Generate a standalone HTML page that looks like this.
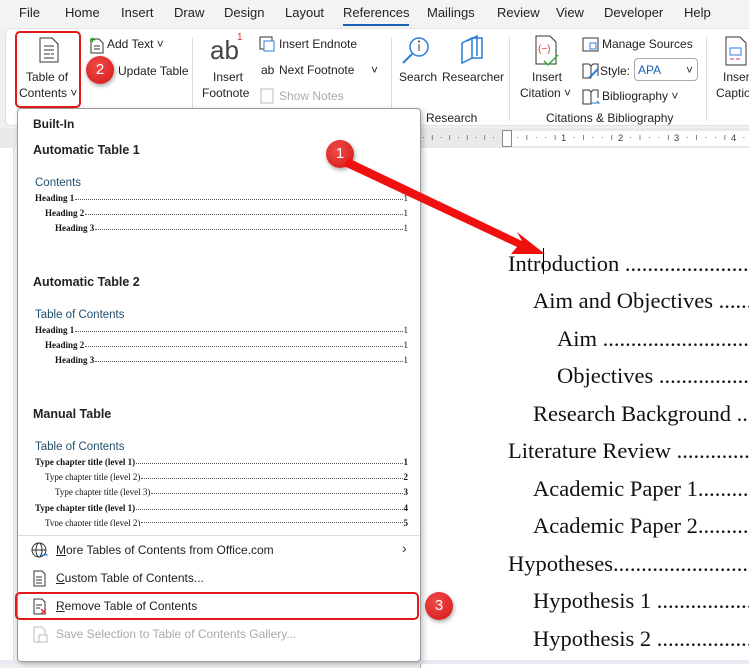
<!DOCTYPE html>
<html><head><meta charset="utf-8"><style>
*{margin:0;padding:0;box-sizing:border-box}
body{width:749px;height:664px;overflow:hidden;background:#f0f0f0;font-family:"Liberation Sans",sans-serif;position:relative;color:#222}
.abs{position:absolute;white-space:nowrap}
.tab{position:absolute;top:5px;font-size:13px;color:#222}
.rib{position:absolute;left:5px;top:28px;width:760px;height:98px;background:#fff;border-radius:6px;border:1px solid #e2e2e2}
.rt{position:absolute;font-size:12px;color:#222;white-space:nowrap}
.sep{position:absolute;top:8px;width:1px;height:84px;background:#ddd}
.page{position:absolute;left:420px;top:148px;width:340px;height:520px;background:#fff;border-left:1px solid #bbb}
.doc{position:absolute;font-family:"Liberation Serif",serif;font-size:22.5px;color:#111;white-space:nowrap;overflow:hidden}
.menu{position:absolute;left:17px;top:108px;width:404px;height:554px;background:#fff;border:1px solid #9a9a9a;border-radius:4px;box-shadow:2px 2px 6px rgba(0,0,0,.25);overflow:hidden}
.mh{position:absolute;left:15px;font-weight:bold;font-size:12.5px;color:#222}
.ct{position:absolute;left:17px;font-size:11.5px;color:#1f4e6e}
.tl{position:absolute;font-family:"Liberation Serif",serif;font-size:9px;display:flex;right:12px;color:#111}
.tl span.d{flex:1;border-bottom:1px dotted #555;margin:0 1px 3px}
.mi{position:absolute;left:38px;font-size:12px;color:#222}
.circ{position:absolute;width:28px;height:28px;border-radius:50%;background:radial-gradient(circle at 40% 35%,#f04a4a,#d41515);color:#fff;font-size:15px;text-align:center;line-height:28px;box-shadow:1px 2px 4px rgba(0,0,0,.35)}
.rn{position:absolute;top:133px;font-size:9.5px;color:#444}
</style></head><body>
<div class="abs" style="left:0;top:0;width:749px;height:28px;background:#f3f3f3"></div>
<div class="tab" style="left:19px">File</div>
<div class="tab" style="left:65px">Home</div>
<div class="tab" style="left:121px">Insert</div>
<div class="tab" style="left:174px">Draw</div>
<div class="tab" style="left:224px">Design</div>
<div class="tab" style="left:285px">Layout</div>
<div class="tab" style="left:343px">References</div>
<div class="abs" style="left:343px;top:24px;width:66px;height:2px;background:#1a5fb4"></div>
<div class="tab" style="left:427px">Mailings</div>
<div class="tab" style="left:497px">Review</div>
<div class="tab" style="left:556px">View</div>
<div class="tab" style="left:604px">Developer</div>
<div class="tab" style="left:684px">Help</div>

<div class="rib">
 <svg class="abs" style="left:32px;top:8px" width="22" height="26" viewBox="0 0 22 26"><path d="M2 1h12l6 6v18H2z" fill="#fff" stroke="#333"/><path d="M6 9h10M6 13h10M6 17h6M13 17h3M6 21h10" stroke="#333"/></svg>
 <div class="rt" style="left:20px;top:41px">Table of</div>
 <div class="rt" style="left:13px;top:57px">Contents ˅</div>
 <svg class="abs" style="left:82px;top:7px" width="16" height="18"><path d="M3 3h8l4 4v10H3z" fill="#fff" stroke="#333"/><path d="M2 4h5M4.5 1.5v5" stroke="#2a2"/><path d="M6 10h6M6 13h6" stroke="#333"/></svg>
 <div class="rt" style="left:101px;top:8px">Add Text ˅</div>
 <div class="rt" style="left:112px;top:35px">Update Table</div>
 <div class="sep" style="left:186px"></div>
 <div class="abs" style="left:204px;top:6px;font-size:26px;color:#444">ab</div><div class="abs" style="left:231px;top:3px;font-size:10px;color:#d33">1</div>
 <div class="rt" style="left:207px;top:41px">Insert</div>
 <div class="rt" style="left:196px;top:57px">Footnote</div>
 <svg class="abs" style="left:253px;top:7px" width="16" height="16"><rect x="1" y="1" width="12" height="12" fill="#fff" stroke="#333"/><rect x="5" y="5" width="10" height="10" fill="#fff" stroke="#2a7fd4"/></svg>
 <div class="rt" style="left:273px;top:8px">Insert Endnote</div>
 <div class="rt" style="left:255px;top:34px;font-size:12px">ab</div>
 <div class="rt" style="left:273px;top:34px">Next Footnote &nbsp;&nbsp;&nbsp; ˅</div>
 <svg class="abs" style="left:254px;top:59px" width="14" height="16"><rect x="1" y="1" width="12" height="14" fill="#fff" stroke="#bbb"/></svg>
 <div class="rt" style="left:273px;top:60px;color:#aaa">Show Notes</div>
 <div class="sep" style="left:385px"></div>
 <svg class="abs" style="left:393px;top:6px" width="32" height="30"><circle cx="20" cy="12" r="9" fill="#fff" stroke="#2a7fd4" stroke-width="1.5"/><path d="M13 19L4 28" stroke="#2a7fd4" stroke-width="2"/><path d="M20 9v7" stroke="#333"/><circle cx="20" cy="6.5" r="1" fill="#333"/></svg>
 <div class="rt" style="left:393px;top:41px">Search</div>
 <svg class="abs" style="left:452px;top:6px" width="28" height="30"><path d="M4 8l10-5v20l-10 5z M9 6l10-5v20" fill="none" stroke="#2a7fd4" stroke-width="1.5"/><path d="M14 3h10v20H14" fill="none" stroke="#2a7fd4" stroke-width="1.5"/></svg>
 <div class="rt" style="left:436px;top:41px">Researcher</div>
 <div class="rt" style="left:420px;top:82px">Research</div>
 <div class="sep" style="left:503px"></div>
 <svg class="abs" style="left:528px;top:6px" width="30" height="32"><path d="M2 1h14l6 6v22H2z" fill="#fff" stroke="#333"/><text x="4" y="17" font-size="10" fill="#d33" font-family="Liberation Sans">(−)</text><path d="M10 26l4 4 10-10" stroke="#3a3" stroke-width="1.5" fill="none"/></svg>
 <div class="rt" style="left:526px;top:41px">Insert</div>
 <div class="rt" style="left:514px;top:57px">Citation ˅</div>
 <svg class="abs" style="left:576px;top:8px" width="18" height="16"><rect x="1" y="1" width="15" height="13" fill="#fff" stroke="#333"/><rect x="8" y="6" width="6" height="6" fill="none" stroke="#2a7fd4"/></svg>
 <div class="rt" style="left:596px;top:8px">Manage Sources</div>
 <svg class="abs" style="left:576px;top:33px" width="18" height="18"><path d="M1 2h6l2 2v12H1z M9 4l2-2h5v12" fill="none" stroke="#333"/><path d="M7 16l9-9" stroke="#2a7fd4" stroke-width="2"/></svg>
 <div class="rt" style="left:594px;top:35px">Style:</div>
 <div class="abs" style="left:628px;top:29px;width:64px;height:23px;border:1px solid #aaa;border-radius:4px;font-size:12px;color:#1a5fb4;padding:4px 3px">APA<span style="position:absolute;right:4px;color:#333">˅</span></div>
 <svg class="abs" style="left:576px;top:59px" width="18" height="18"><path d="M1 2h6l2 2v12H1z M9 4l2-2h5v8" fill="none" stroke="#333"/><path d="M9 15h8l-2-2" stroke="#2a7fd4" fill="none"/></svg>
 <div class="rt" style="left:596px;top:60px">Bibliography ˅</div>
 <div class="rt" style="left:540px;top:82px">Citations &amp; Bibliography</div>
 <div class="sep" style="left:700px"></div>
 <svg class="abs" style="left:718px;top:7px" width="26" height="30"><path d="M2 1h14l6 6v22H2z" fill="#fff" stroke="#333"/><rect x="6" y="12" width="11" height="7" fill="#fff" stroke="#2a7fd4"/><path d="M6 23h4M12 23h4" stroke="#d33"/></svg>
 <div class="rt" style="left:717px;top:41px">Insert</div>
 <div class="rt" style="left:710px;top:57px">Caption</div>
</div>

<!-- rulers -->
<div class="abs" style="left:0;top:128px;width:749px;height:20px;background:#e9e9e9"></div>
<div class="abs" style="left:512px;top:131px;width:237px;height:15px;background:#fff"></div>
<div class="abs" style="left:422px;top:132px;font-size:9px;color:#666;letter-spacing:6px">·ı·ı·ı·ı·</div>
<div class="abs" style="left:502px;top:130px;width:10px;height:17px;border:1px solid #888;background:#fff"></div>
<div class="abs" style="left:516px;top:132px;font-size:9px;color:#666;letter-spacing:6.6px">·ı··ı··ı··ı··ı··ı··ı··ı··</div>
<div class="rn" style="left:560px;background:#fff;padding:0 1px">1</div>
<div class="rn" style="left:617px;background:#fff;padding:0 1px">2</div>
<div class="rn" style="left:673px;background:#fff;padding:0 1px">3</div>
<div class="rn" style="left:730px;background:#fff;padding:0 1px">4</div>
<div class="abs" style="left:0;top:148px;width:14px;height:516px;background:#fff;border-right:1px solid #ddd"></div>

<div class="page"></div>
<div class="doc" style="left:508px;top:251px;width:241px">Introduction ......................................</div>
<div class="abs" style="left:543px;top:248px;width:1px;height:26px;background:#000"></div>
<div class="doc" style="left:533px;top:288px;width:216px">Aim and Objectives ..............</div>
<div class="doc" style="left:557px;top:326px;width:192px">Aim .........................................</div>
<div class="doc" style="left:557px;top:363px;width:192px">Objectives ..............................</div>
<div class="doc" style="left:533px;top:401px;width:216px">Research Background ..........</div>
<div class="doc" style="left:508px;top:438px;width:241px">Literature Review ...........................</div>
<div class="doc" style="left:533px;top:476px;width:216px">Academic Paper 1..................</div>
<div class="doc" style="left:533px;top:513px;width:216px">Academic Paper 2..................</div>
<div class="doc" style="left:508px;top:551px;width:241px">Hypotheses...................................</div>
<div class="doc" style="left:533px;top:588px;width:216px">Hypothesis 1 ...........................</div>
<div class="doc" style="left:533px;top:626px;width:216px">Hypothesis 2 ...........................</div>
<div class="abs" style="left:0;top:660px;width:749px;height:4px;background:#ece8f0"></div>

<div class="menu">
 <div class="mh" style="top:8px;font-size:12px">Built-In</div>
 <div class="mh" style="top:34px">Automatic Table 1</div>
 <div class="ct" style="top:68px">Contents</div>
 <div class="tl" style="left:17px;top:84px"><b>Heading 1</b><span class="d"></span>1</div>
 <div class="tl" style="left:27px;top:99px"><b>Heading 2</b><span class="d"></span>1</div>
 <div class="tl" style="left:37px;top:114px"><b>Heading 3</b><span class="d"></span>1</div>
 <div class="mh" style="top:166px">Automatic Table 2</div>
 <div class="ct" style="top:200px">Table of Contents</div>
 <div class="tl" style="left:17px;top:216px"><b>Heading 1</b><span class="d"></span>1</div>
 <div class="tl" style="left:27px;top:231px"><b>Heading 2</b><span class="d"></span>1</div>
 <div class="tl" style="left:37px;top:246px"><b>Heading 3</b><span class="d"></span>1</div>
 <div class="mh" style="top:298px">Manual Table</div>
 <div class="ct" style="top:332px">Table of Contents</div>
 <div class="tl" style="left:17px;top:348px"><b>Type chapter title (level 1)</b><span class="d"></span><b>1</b></div>
 <div class="tl" style="left:27px;top:363px">Type chapter title (level 2)<span class="d"></span><b>2</b></div>
 <div class="tl" style="left:37px;top:378px">Type chapter title (level 3)<span class="d"></span><b>3</b></div>
 <div class="tl" style="left:17px;top:394px"><b>Type chapter title (level 1)</b><span class="d"></span><b>4</b></div>
 <div class="tl" style="left:27px;top:409px;height:8px;overflow:hidden">Type chapter title (level 2)<span class="d"></span><b>5</b></div>
 <div class="abs" style="left:0;top:426px;width:404px;height:1px;background:#ddd"></div>
 <svg class="abs" style="left:13px;top:433px" width="17" height="17"><circle cx="8" cy="8" r="7" fill="none" stroke="#333"/><ellipse cx="8" cy="8" rx="3" ry="7" fill="none" stroke="#333"/><path d="M1 8h14" stroke="#333"/><path d="M9 13h7l-2-2" stroke="#2a7fd4" fill="none"/></svg>
 <div class="mi" style="top:434px"><u>M</u>ore Tables of Contents from Office.com</div>
 <div class="abs" style="left:384px;top:431px;font-size:14px;color:#333">›</div>
 <svg class="abs" style="left:15px;top:461px" width="13" height="17"><path d="M1 1h8l3 3v12H1z" fill="#fff" stroke="#333"/><path d="M3 7h6M3 10h6M3 13h6" stroke="#333"/></svg>
 <div class="mi" style="top:462px"><u>C</u>ustom Table of Contents...</div>
 <svg class="abs" style="left:15px;top:489px" width="15" height="17"><path d="M1 1h8l3 3v12H1z" fill="#fff" stroke="#333"/><path d="M3 7h6M3 10h4" stroke="#333"/><path d="M8 11l5 5M13 11l-5 5" stroke="#d33" stroke-width="1.3"/></svg>
 <div class="mi" style="top:490px"><u>R</u>emove Table of Contents</div>
 <svg class="abs" style="left:15px;top:517px" width="15" height="17"><path d="M1 1h8l3 3v12H1z" fill="#fff" stroke="#bbb"/><rect x="6" y="9" width="8" height="7" fill="#fff" stroke="#bbb"/></svg>
 <div class="mi" style="top:518px;color:#aaa">Save Selection to Table of Contents Gallery...</div>
</div>

<div class="abs" style="left:15px;top:31px;width:66px;height:77px;border:2px solid #e01818;border-radius:5px"></div>
<div class="abs" style="left:15px;top:592px;width:404px;height:28px;border:2px solid #e01818;border-radius:5px"></div>
<div class="circ" style="left:86px;top:56px">2</div>
<div class="circ" style="left:326px;top:140px">1</div>
<div class="circ" style="left:425px;top:592px">3</div>
<svg class="abs" style="left:0;top:0" width="749" height="664"><path d="M348 158L522 241L517 232L545 254L511 254L517 247L344 166Z" fill="#f01010"/></svg>
</body></html>
